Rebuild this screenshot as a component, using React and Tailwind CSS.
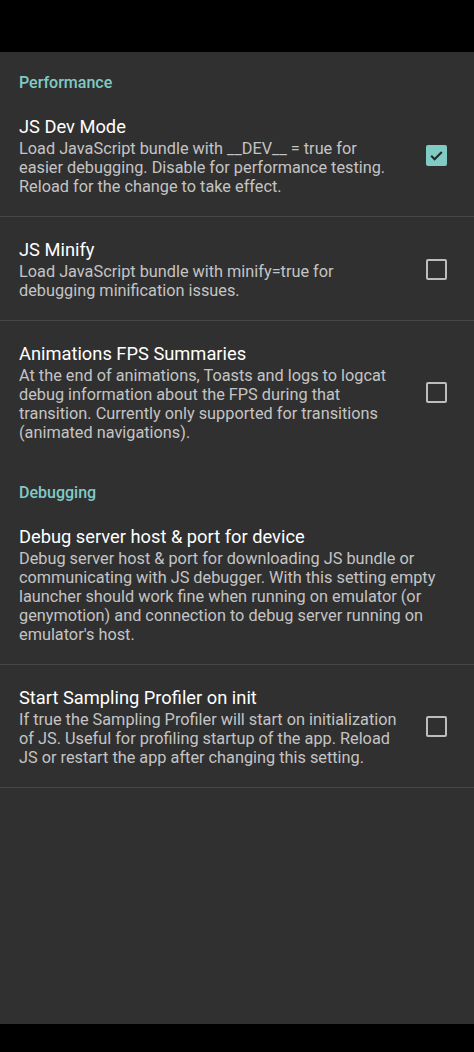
import React, { useState } from "react";

const SECTIONS = [
  {
    title: "Performance",
    items: [
      {
        key: "dev",
        title: "JS Dev Mode",
        desc: "Load JavaScript bundle with __DEV__ = true for easier debugging. Disable for performance testing. Reload for the change to take effect.",
        checkbox: true,
        divider: true,
      },
      {
        key: "minify",
        title: "JS Minify",
        desc: "Load JavaScript bundle with minify=true for debugging minification issues.",
        checkbox: true,
        divider: true,
      },
      {
        key: "fps",
        title: "Animations FPS Summaries",
        desc: "At the end of animations, Toasts and logs to logcat debug information about the FPS during that transition. Currently only supported for transitions (animated navigations).",
        checkbox: true,
      },
    ],
  },
  {
    title: "Debugging",
    items: [
      {
        key: "host",
        title: "Debug server host & port for device",
        desc: "Debug server host & port for downloading JS bundle or communicating with JS debugger. With this setting empty launcher should work fine when running on emulator (or genymotion) and connection to debug server running on emulator's host.",
        divider: true,
      },
      {
        key: "profiler",
        title: "Start Sampling Profiler on init",
        desc: "If true the Sampling Profiler will start on initialization of JS. Useful for profiling startup of the app. Reload JS or restart the app after changing this setting.",
        checkbox: true,
        divider: true,
      },
    ],
  },
];

const Checkbox = ({ checked, onClick }) => (
  <button
    onClick={onClick}
    className={`w-[21px] h-[21px] rounded-[2px] flex items-center justify-center shrink-0 ${
      checked ? "bg-[#80cbc4]" : "border-2 border-[#bdbdbd]"
    }`}
  >
    {checked && (
      <svg width="17" height="17" viewBox="0 0 24 24" fill="none">
        <path d="M4.5 12.5l4.8 4.8L19.5 7" stroke="#1f2a2a" strokeWidth="3" />
      </svg>
    )}
  </button>
);

export default function App() {
  const [checked, setChecked] = useState({ dev: true });

  const toggle = (key) => setChecked(prev => ({ ...prev, [key]: !prev[key] }));

  return (
    <div
      className="w-[474px] h-[1052px] bg-black flex flex-col"
      style={{ fontFamily: "Roboto, 'Noto Sans', sans-serif" }}
    >
      <div className="h-[52px] shrink-0" />
      <div className="flex-1 bg-[#303030]">
        {SECTIONS.map(section => (
          <div key={section.title}>
            <div className="pl-[19px] pt-[21px] pb-[1px] text-[16px] leading-[20px] font-medium text-[#80cbc4]">
              {section.title}
            </div>
            {section.items.map(item => (
              <div
                key={item.key}
                className={`flex items-center pl-[19px] pr-[27px] pt-[21px] pb-[20px] ${item.divider ? "border-b border-[#474747]" : ""}`}
              >
                <div className="flex-1">
                  <div className="text-[18.3px] leading-[24px] text-white">{item.title}</div>
                  <div className="text-[16.3px] leading-[19px] text-[#c4c4c4]">{item.desc}</div>
                </div>
                {item.checkbox && (
                  <div className="ml-[27px]">
                    <Checkbox checked={!!checked[item.key]} onClick={() => toggle(item.key)} />
                  </div>
                )}
              </div>
            ))}
          </div>
        ))}
      </div>
      <div className="h-[28px] shrink-0" />
    </div>
  );
}
